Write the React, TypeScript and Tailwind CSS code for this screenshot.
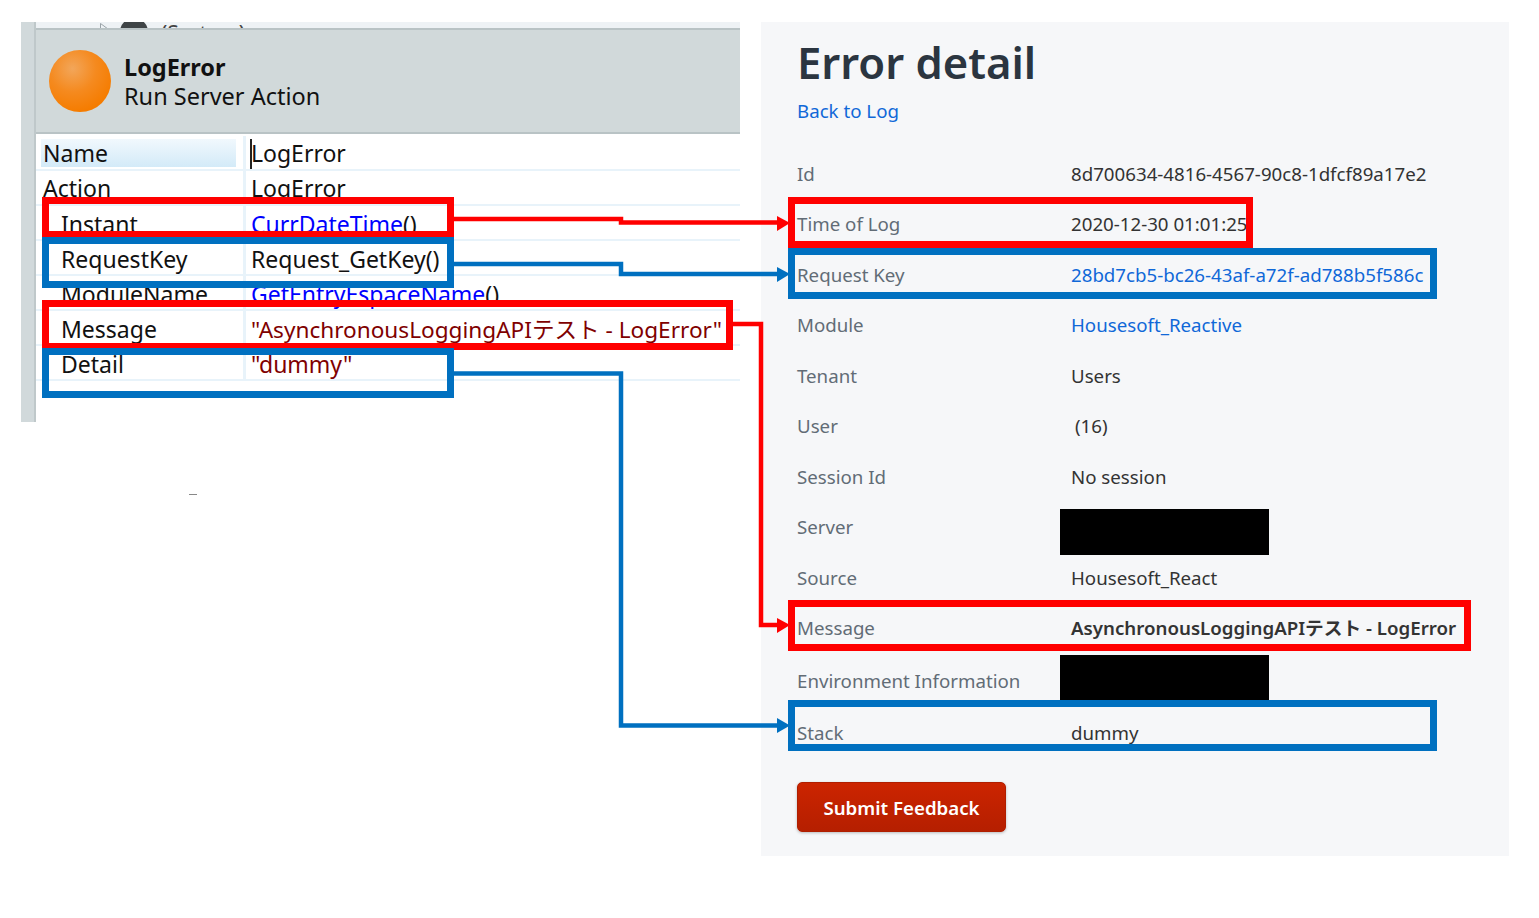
import React from 'react';

const leftFont = { fontFamily: '"Noto Sans", "Noto Sans CJK JP", sans-serif' };

type PropertyRow = {
  label: string;
  value: React.ReactNode;
  child?: boolean;
  selected?: boolean;
};

const properties: PropertyRow[] = [
  { label: 'Name', value: <span>LogError</span>, selected: true },
  { label: 'Action', value: <span>LogError</span> },
  {
    label: 'Instant',
    child: true,
    value: (
      <span>
        <span className="text-[#0000ff]">CurrDateTime</span>()
      </span>
    ),
  },
  { label: 'RequestKey', child: true, value: <span>Request_GetKey()</span> },
  {
    label: 'ModuleName',
    child: true,
    value: (
      <span>
        <span className="text-[#0000ff]">GetEntryEspaceName</span>()
      </span>
    ),
  },
  {
    label: 'Message',
    child: true,
    value: <span className="text-[22.6px] text-[#800000]">"AsynchronousLoggingAPIテスト - LogError"</span>,
  },
  { label: 'Detail', child: true, value: <span className="text-[#800000]">"dummy"</span> },
];

type DetailRow = {
  label: string;
  value?: string;
  link?: boolean;
  bold?: boolean;
  redacted?: boolean;
  indent?: boolean;
};

const details: DetailRow[] = [
  { label: 'Id', value: '8d700634-4816-4567-90c8-1dfcf89a17e2' },
  { label: 'Time of Log', value: '2020-12-30 01:01:25' },
  { label: 'Request Key', value: '28bd7cb5-bc26-43af-a72f-ad788b5f586c', link: true },
  { label: 'Module', value: 'Housesoft_Reactive', link: true },
  { label: 'Tenant', value: 'Users' },
  { label: 'User', value: '(16)', indent: true },
  { label: 'Session Id', value: 'No session' },
  { label: 'Server', redacted: true },
  { label: 'Source', value: 'Housesoft_React' },
  { label: 'Message', value: 'AsynchronousLoggingAPIテスト - LogError', bold: true },
];

function PropertyEditor() {
  return (
    <div className="flex h-[400px] w-[719px] overflow-hidden" style={leftFont}>
      <div className="w-[15px] shrink-0 border-r-2 border-[#bfc8ca] bg-[#d1d9db]" />
      <div className="flex min-w-0 flex-1 flex-col">
        {/* clipped row of the tree above the panel */}
        <div className="relative h-[6px] overflow-hidden bg-[#eef2f5]">
          <svg className="absolute left-[64px] top-[1px]" width="9" height="6" fill="none" stroke="#9aa3a8">
            <path d="M0.5 0.5V6M0.5 0.5L8 6" />
          </svg>
          <span className="absolute left-[84px] top-[-4px] h-[28px] w-[28px] rounded-full bg-[#3f4446]" />
          <span className="absolute left-[125px] top-[-3px] text-[21px] leading-[28px] text-[#444]">(System)</span>
        </div>
        <div className="flex h-[106px] items-center gap-[13px] border-y-2 border-[#b9c3c5] bg-[#d1d9da] pl-[13px]">
          <div className="h-[62px] w-[62px] rounded-full bg-[radial-gradient(circle_at_38%_30%,#f2a65a_0%,#f58a1f_40%,#f57c00_75%)]" />
          <div className="pt-[2px] text-[23.5px] leading-[29px] text-[#111]">
            <div className="font-bold">LogError</div>
            <div>Run Server Action</div>
          </div>
        </div>
        <div className="pt-[2px] text-[23px] text-[#111]">
          {properties.map((row) => (
            <div key={row.label} className="flex h-[35px] border-b-2 border-[#e8f3fa]">
              <div className={`flex w-[207px] shrink-0 items-center overflow-hidden ${row.child ? 'pl-[25px] pt-[4px]' : 'pl-[7px]'}`}>
                {row.selected ? (
                  <div className="-ml-[2px] flex h-[28px] w-[195px] items-center bg-gradient-to-b from-[#f1f8fd] to-[#d3eaf8] pl-[2px] pt-[2px]">
                    {row.label}
                  </div>
                ) : (
                  <span className={row.child ? '' : 'pt-[2px]'}>{row.label}</span>
                )}
              </div>
              <div className="w-[3px] shrink-0 bg-[#e8f3fa]" />
              <div className={`relative flex items-center whitespace-nowrap pl-[5px] ${row.child ? 'pt-[4px]' : 'pt-[2px]'}`}>
                {row.selected && <span className="absolute left-[4px] top-[3px] h-[30px] w-[2px] bg-[#222]" />}
                {row.value}
              </div>
            </div>
          ))}
        </div>
      </div>
    </div>
  );
}

function ErrorDetail() {
  return (
    <div className="h-[834px] w-[748px] bg-[#f6f7f9] pl-[36px] pt-[10px]" style={{ fontFamily: '"Noto Sans", "Noto Sans CJK JP", sans-serif' }}>
      <h1 className="text-[43.6px] font-semibold leading-[60px] text-[#2b3540]">Error detail</h1>
      <a className="mt-[5px] block text-[18.7px] leading-[28px] text-[#1068d8]">Back to Log</a>
      <div className="mt-[23.5px] text-[18.7px]">
        {details.map((row) => (
          <div key={row.label} className="flex h-[50.5px] items-center">
            <div className="w-[274px] shrink-0 text-[#626c76]">{row.label}</div>
            {row.redacted ? (
              <div className="-ml-[11px] mt-[6.5px] h-[46px] w-[209px] self-start bg-black" />
            ) : (
              <div className={`whitespace-nowrap ${row.link ? 'text-[#1068d8]' : 'text-[#333]'} ${row.bold ? 'font-semibold text-[#222]' : ''} ${row.indent ? 'pl-[4px]' : ''}`}>
                {row.value}
              </div>
            )}
          </div>
        ))}
        <div className="flex h-[54px] items-center">
          <div className="w-[274px] shrink-0 pt-[2px] text-[#626c76]">Environment Information</div>
          <div className="-ml-[11px] mt-[1px] h-[46px] w-[209px] self-start bg-black" />
        </div>
        <div className="flex h-[50.5px] items-center">
          <div className="w-[274px] shrink-0 text-[#626c76]">Stack</div>
          <div className="text-[#333]">dummy</div>
        </div>
      </div>
      <button className="mt-[23.5px] h-[50px] w-[209px] rounded-[5px] border border-[#b01e00] bg-gradient-to-b from-[#cc2400] to-[#b51f00] pt-[3px] text-[18.7px] font-semibold text-white shadow-[0_1px_3px_rgba(0,0,0,0.25)]">
        Submit Feedback
      </button>
    </div>
  );
}

// callout frames sit on top of both screenshots
function Callouts() {
  const red = '#ff0000';
  const blue = '#0070c0';
  return (
    <>
      <div className="absolute left-[42px] top-[197px] h-[41px] w-[412px] border-[7px] border-[#ff0000]" />
      <div className="absolute left-[42px] top-[237px] h-[51px] w-[412px] border-[7px] border-[#0070c0]" />
      <div className="absolute left-[42px] top-[300px] h-[50px] w-[691px] border-[7px] border-[#ff0000]" />
      <div className="absolute left-[42px] top-[348px] h-[50px] w-[412px] border-[7px] border-[#0070c0]" />
      <div className="absolute left-[788px] top-[197px] h-[51px] w-[465px] border-[7px] border-[#ff0000]" />
      <div className="absolute left-[788px] top-[248px] h-[51px] w-[649px] border-[7px] border-[#0070c0]" />
      <div className="absolute left-[788px] top-[600px] h-[51px] w-[683px] border-[7px] border-[#ff0000]" />
      <div className="absolute left-[788px] top-[700px] h-[51px] w-[649px] border-[7px] border-[#0070c0]" />
      <svg className="absolute left-0 top-0" width="1539" height="918" fill="none" strokeWidth="4.5">
        <path d="M454 219H621V222.5H780" stroke={red} />
        <path d="M777 216L790 223L777 231Z" fill={red} />
        <path d="M454 264H621V274H780" stroke={blue} />
        <path d="M777 267L790 274L777 282Z" fill={blue} />
        <path d="M733 324H761V625H780" stroke={red} />
        <path d="M777 618L790 625L777 633Z" fill={red} />
        <path d="M454 373.5H621V725.5H780" stroke={blue} />
        <path d="M777 718L790 725.5L777 733Z" fill={blue} />
      </svg>
    </>
  );
}

export default function App() {
  return (
    <div className="relative h-[918px] w-[1539px] overflow-hidden bg-white">
      <div className="flex items-start gap-[21px] pl-[21px] pt-[22px]">
        <div>
          <PropertyEditor />
          <div className="ml-[168px] mt-[72px] h-px w-[8px] bg-[#888]" />
        </div>
        <ErrorDetail />
      </div>
      <Callouts />
    </div>
  );
}
